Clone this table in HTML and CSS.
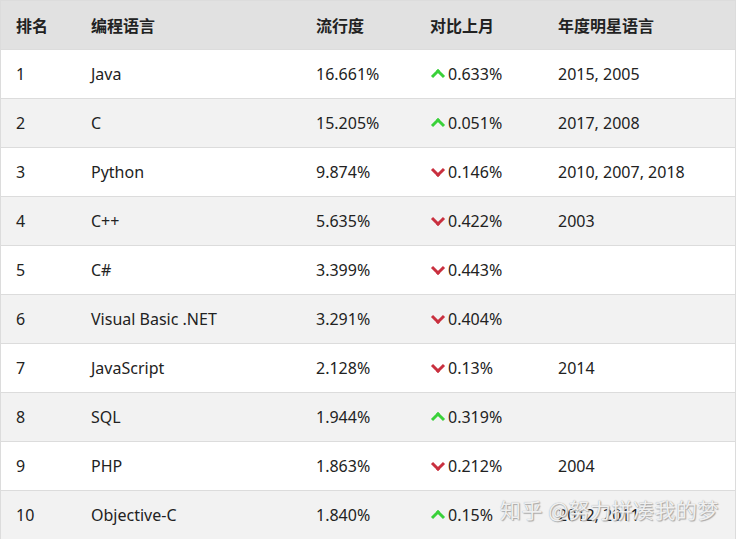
FILE: index.html
```
<!DOCTYPE html>
<html lang="zh">
<head>
<meta charset="utf-8">
<link rel="stylesheet" href="styles.css">
</head>
<body>
<div class="wrap">
<table class="rank">
  <thead>
    <tr><th>排名</th><th>编程语言</th><th>流行度</th><th>对比上月</th><th>年度明星语言</th></tr>
  </thead>
  <tbody>
    <tr><td>1</td><td>Java</td><td>16.661%</td><td><span class="up"></span>0.633%</td><td>2015, 2005</td></tr>
    <tr><td>2</td><td>C</td><td>15.205%</td><td><span class="up"></span>0.051%</td><td>2017, 2008</td></tr>
    <tr><td>3</td><td>Python</td><td>9.874%</td><td><span class="down"></span>0.146%</td><td>2010, 2007, 2018</td></tr>
    <tr><td>4</td><td>C++</td><td>5.635%</td><td><span class="down"></span>0.422%</td><td>2003</td></tr>
    <tr><td>5</td><td>C#</td><td>3.399%</td><td><span class="down"></span>0.443%</td><td></td></tr>
    <tr><td>6</td><td>Visual Basic .NET</td><td>3.291%</td><td><span class="down"></span>0.404%</td><td></td></tr>
    <tr><td>7</td><td>JavaScript</td><td>2.128%</td><td><span class="down"></span>0.13%</td><td>2014</td></tr>
    <tr><td>8</td><td>SQL</td><td>1.944%</td><td><span class="up"></span>0.319%</td><td></td></tr>
    <tr><td>9</td><td>PHP</td><td>1.863%</td><td><span class="down"></span>0.212%</td><td>2004</td></tr>
    <tr><td>10</td><td>Objective-C</td><td>1.840%</td><td><span class="up"></span>0.15%</td><td>2012, 2011</td></tr>
  </tbody>
</table>
<div class="watermark">知乎 @努力拼凑我的梦</div>
</div>
</body>
</html>
```
FILE: styles.css
```
html, body { margin: 0; padding: 0; background: #fff; }
body {
  font-family: "Noto Sans", "Noto Sans CJK SC", sans-serif;
  font-size: 16px;
  color: #222;
}
.wrap { position: relative; width: 737px; height: 539px; overflow: hidden; }
.rank {
  border-collapse: collapse;
  width: 736px;
  table-layout: fixed;
  border-left: 1px solid #dcdcdc;
  border-right: 1px solid #dcdcdc;
}
.rank th, .rank td {
  height: 48px;
  padding: 0 0 0 15px;
  text-align: left;
  white-space: nowrap;
  border-bottom: 1px solid #dcdcdc;
  vertical-align: middle;
}
.rank th:nth-child(1), .rank td:nth-child(1) { width: 60px; }
.rank th:nth-child(2), .rank td:nth-child(2) { width: 210px; }
.rank th:nth-child(3), .rank td:nth-child(3) { width: 99px; }
.rank th:nth-child(4), .rank td:nth-child(4) { width: 113px; }
.rank thead th {
  background: #e1e1e1;
  font-family: "Noto Sans CJK SC", sans-serif;
  font-weight: 700;
  color: #222;
  border-top: 1px solid #dcdcdc;
}
.rank tbody tr:nth-child(odd) td { background: #fff; }
.rank tbody tr:nth-child(even) td { background: #f2f2f2; }
.up, .down {
  display: inline-block;
  width: 7px;
  height: 7px;
  border-style: solid;
  border-width: 0;
  margin-right: 5px;
  transform-origin: center;
}
.up {
  border-color: #3ad13a;
  border-top-width: 3px;
  border-left-width: 3px;
  transform: rotate(45deg);
  margin-left: 3px;
  vertical-align: -1px;
}
.down {
  border-color: #c9303f;
  border-bottom-width: 3px;
  border-right-width: 3px;
  transform: rotate(45deg);
  margin-left: 3px;
  vertical-align: 3px;
}
.watermark {
  position: absolute;
  left: 500px;
  top: 494px;
  font-family: "Noto Sans CJK SC", sans-serif;
  font-size: 21px;
  color: rgba(255,255,255,0.85);
  text-shadow: 0 0 1px #999, 1px 1px 1px #aaa;
  letter-spacing: 0.5px;
}
```
